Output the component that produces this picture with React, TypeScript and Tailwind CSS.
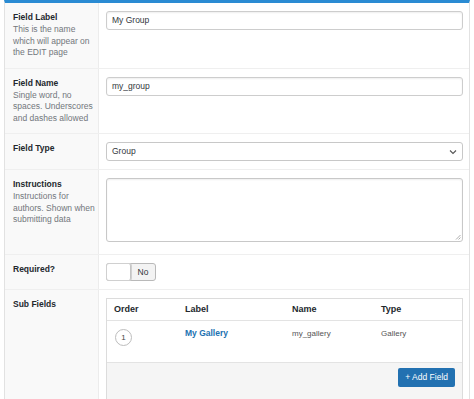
import React from "react";

const rows = [
  {
    label: "Field Label",
    value: "My Group",
    desc: ["This is the name", "which will appear on", "the EDIT page"],
  },
  {
    label: "Field Name",
    value: "my_group",
    desc: ["Single word, no", "spaces. Underscores", "and dashes allowed"],
  },
];

function Row({
  label,
  desc,
  children,
  last,
}: {
  label: string;
  desc?: string[];
  children: React.ReactNode;
  last?: boolean;
}) {
  return (
    <div className={`flex ${last ? "" : "border-b border-[#efefef]"}`}>
      <div className="w-[94px] shrink-0 bg-[#f9f9f9] border-r border-[#ececec] pl-[8px] pt-[8px] pb-[9px]">
        <div className="text-[8.5px] leading-[12px] font-bold text-[#23282d]">{label}</div>
        {desc && (
          <div className="mt-[1px] text-[8.5px] leading-[11.5px] text-[#72777c] whitespace-nowrap">
            {desc.map((d) => (
              <div key={d}>{d}</div>
            ))}
          </div>
        )}
      </div>
      <div className="flex-1 pl-[7px] pr-[6px] pt-[8px] pb-[8px]">{children}</div>
    </div>
  );
}

function TextInput({ value }: { value: string }) {
  return (
    <div className="h-[19px] rounded-[3px] border border-[#cdcdcd] shadow-[inset_0_1px_2px_rgba(0,0,0,0.07)] bg-white flex items-center pl-[5px] text-[8.5px] text-[#32373c]">
      {value}
    </div>
  );
}

export default function App() {
  return (
    <div
      className="w-[474px] h-[399px] bg-white overflow-hidden"
      style={{ fontFamily: '"Liberation Sans", Arial, sans-serif' }}
    >
      <div className="ml-[4px] w-[466px] border-t-[3px] border-t-[#2a8bd3] border-x border-x-[#e2e2e2]">
        {rows.map((r) => (
          <Row key={r.label} label={r.label} desc={r.desc}>
            <TextInput value={r.value} />
          </Row>
        ))}

        <Row label="Field Type">
          <div className="h-[19px] rounded-[3px] border border-[#c8c8c8] bg-white flex items-center justify-between pl-[5px] pr-[5px] text-[8.5px] text-[#32373c]">
            <span>Group</span>
            <svg width="8" height="6" viewBox="0 0 8 6" fill="none">
              <path d="M1 1.5 L4 4.5 L7 1.5" stroke="#555" strokeWidth="1.1" />
            </svg>
          </div>
        </Row>

        <Row
          label="Instructions"
          desc={["Instructions for", "authors. Shown when", "submitting data"]}
        >
          <div className="relative h-[64px] mb-[4px] rounded-[3px] border border-[#c8c8c8] shadow-[inset_0_1px_2px_rgba(0,0,0,0.07)] bg-white">
            <svg className="absolute right-[1px] bottom-[1px]" width="6" height="6" viewBox="0 0 6 6">
              <path d="M5.5 1 L1 5.5 M5.5 3.5 L3.5 5.5" stroke="#999" strokeWidth="0.8" />
            </svg>
          </div>
        </Row>

        <Row label="Required?">
          <div className="w-[50px] h-[18px] rounded-[3px] border border-[#b9b9b9] bg-[#f3f3f3] flex items-center">
            <div className="w-[24px] h-[16px] bg-white rounded-[2px] border-r border-[#c4c4c4] shadow-[0_0_0_1px_#d0d0d0]" />
            <div className="flex-1 text-center text-[8.5px] text-[#32373c]">No</div>
          </div>
        </Row>

        <Row label="Sub Fields" last>
          <div className="border border-[#dcdcdc] text-[8.5px]">
            <div className="grid grid-cols-[71px_107px_89px_1fr] h-[22px] items-center border-b border-[#e3e3e3] font-bold text-[9px] text-[#23282d]">
              <div className="pl-[7px]">Order</div>
              <div className="pl-[7px]">Label</div>
              <div className="pl-[7px]">Name</div>
              <div className="pl-[7px]">Type</div>
            </div>
            <div className="grid grid-cols-[71px_107px_89px_1fr] h-[42px] items-start border-b border-[#e3e3e3] text-[#555]">
              <div className="pl-[8px] pt-[8px]">
                <div className="w-[17px] h-[17px] rounded-full border border-[#bdbdbd] flex items-center justify-center text-[8px] text-[#444]">
                  1
                </div>
              </div>
              <div className="pl-[7px] pt-[6px] font-bold text-[#2271b1]">My Gallery</div>
              <div className="pl-[7px] pt-[7px] text-[8px]">my_gallery</div>
              <div className="pl-[7px] pt-[7px] text-[8px]">Gallery</div>
            </div>
            <div className="bg-[#f5f5f5] h-[40px] flex justify-end pt-[5px] pr-[7px]">
              <div className="h-[19px] px-[7px] rounded-[2px] bg-[#2271b1] text-white text-[8.5px] flex items-center">
                + Add Field
              </div>
            </div>
          </div>
        </Row>
      </div>
    </div>
  );
}
